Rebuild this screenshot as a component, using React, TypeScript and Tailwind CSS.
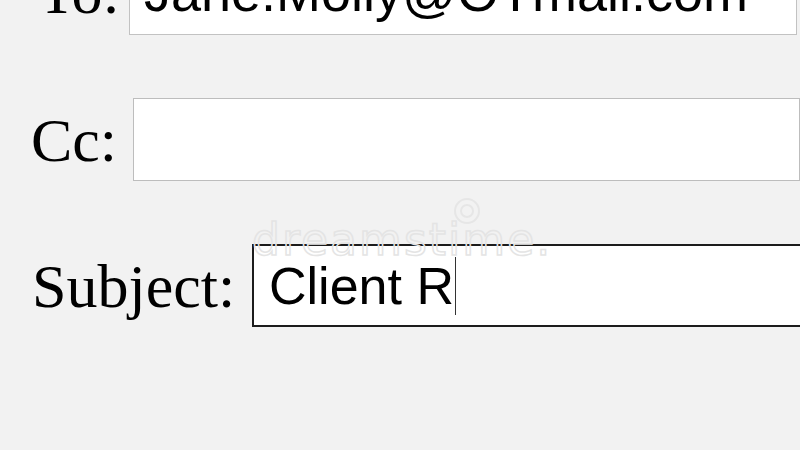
import React from 'react';

const label = "font-['Liberation_Serif',serif] text-[62px] leading-none text-black";
const field = "h-[83px] bg-white flex items-center font-['Liberation_Sans',Arial,sans-serif] text-[52px] leading-none text-black whitespace-nowrap overflow-hidden";

export default function App() {
  return <div className="w-[800px] h-[450px] bg-[#f2f2f2] overflow-hidden relative">
      <div className="flex flex-col gap-[63px] mt-[-48px]">
        {/* To */}
        <div className="flex items-center">
          <div className="w-[129px] pl-[38px] pb-[4px] shrink-0">
            <span className={label}>To:</span>
          </div>
          <div className={`${field} w-[668px] shrink-0 border-[1.5px] border-[#c2c2c2] pl-[14px] pb-[4px] text-[54px]`}>
            Jane.Molly@OTmail.com
          </div>
        </div>

        {/* Cc */}
        <div className="flex items-center">
          <div className="w-[133px] pl-[31px] shrink-0">
            <span className={label}>Cc:</span>
          </div>
          <div className={`${field} w-[667px] shrink-0 border-[1.5px] border-[#bdbdbd]`} />
        </div>

        {/* Subject */}
        <div className="flex items-center">
          <div className="w-[252px] pl-[32px] shrink-0">
            <span className={label}>Subject:</span>
          </div>
          <div className={`${field} w-[600px] shrink-0 border-2 border-[#1c1c1c] pl-[15px]`}>
            <span>Client R</span>
            <span className="inline-block w-[1.5px] h-[58px] bg-[#333] ml-[1px]" />
          </div>
        </div>
      </div>

      {/* watermark */}
      <div className="absolute left-[252px] top-[196px] flex flex-col items-center pointer-events-none">
        <svg width="30" height="30" viewBox="0 0 30 30" className="ml-[130px]">
          <circle cx="15" cy="15" r="12" fill="none" stroke="#e6e6e6" strokeWidth="2" />
          <circle cx="15" cy="15" r="6" fill="none" stroke="#e6e6e6" strokeWidth="2" />
        </svg>
        <span className="font-['DejaVu_Sans',sans-serif] text-[44px] leading-none text-transparent [-webkit-text-stroke:1.5px_#e4e4e4] tracking-[2px] mt-[-8px]">
          dreamstime.
        </span>
      </div>
    </div>;
}
